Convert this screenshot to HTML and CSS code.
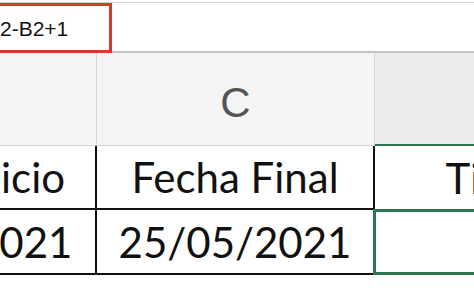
FILE: index.html
```html
<!DOCTYPE html>
<html lang="es">
<head>
<meta charset="utf-8">
<title>Hoja de cálculo</title>
<link rel="stylesheet" href="styles.css">
</head>
<body>
<div class="screen">
  <div class="formula-bar">
    <div class="formula-box">2-B2+1</div>
    <div class="formula-rest"></div>
  </div>
  <div class="sheet">
    <div class="col-head">B</div>
    <div class="col-head">C</div>
    <div class="col-head active">D</div>

    <div class="cell">Fecha Inicio</div>
    <div class="cell">Fecha Final</div>
    <div class="cell last-head">Tiempo</div>

    <div class="cell">01/05/2021</div>
    <div class="cell">25/05/2021</div>
    <div class="cell selected"></div>
  </div>
</div>
</body>
</html>
```
FILE: styles.css
```css
html, body {
  margin: 0;
  padding: 0;
  background: #ffffff;
}

.screen {
  width: 474px;
  height: 291px;
  overflow: hidden;
  position: relative;
  background: #ffffff;
}

.formula-bar {
  margin-top: 2px;
  height: 51px;
  box-sizing: border-box;
  border-top: 1px solid #cfcfcf;
  border-bottom: 2px solid #c3c3c3;
  display: flex;
  background: #ffffff;
}

.formula-box {
  margin-left: -3px;
  margin-bottom: -2px;
  width: 115px;
  box-sizing: border-box;
  border: 3px solid #d53a2b;
  display: flex;
  align-items: center;
  font-family: "Liberation Sans", Arial, sans-serif;
  font-size: 21px;
  color: #111111;
  padding-left: 0;
  padding-top: 1px;
}

.formula-rest {
  flex: 1;
}

.sheet {
  margin-left: -183px;
  display: grid;
  grid-template-columns: 280px 278px 280px;
  grid-template-rows: 93px 64px 65px;
}

.col-head {
  box-sizing: border-box;
  background: #f4f4f4;
  border-right: 1px solid #d6d6d6;
  border-bottom: 1px solid #d2d2d2;
  display: flex;
  align-items: center;
  justify-content: center;
  padding-top: 8px;
  font-family: "Liberation Sans", Arial, sans-serif;
  font-size: 42px;
  color: #555555;
}

.col-head.active {
  background: #ececec;
  border-bottom: 2px solid #2f7553;
}

.cell {
  box-sizing: border-box;
  border-right: 2px solid #111111;
  border-bottom: 2px solid #111111;
  display: flex;
  align-items: center;
  justify-content: center;
  font-family: "Lato", "Liberation Sans", sans-serif;
  font-size: 42px;
  color: #111111;
  white-space: nowrap;
  overflow: hidden;
}

.cell.last-head {
  border-right: none;
  border-bottom: none;
}

.cell.selected {
  margin-left: -2px;
  border: 3px solid #2f7553;
  margin-top: -1px;
}
```
